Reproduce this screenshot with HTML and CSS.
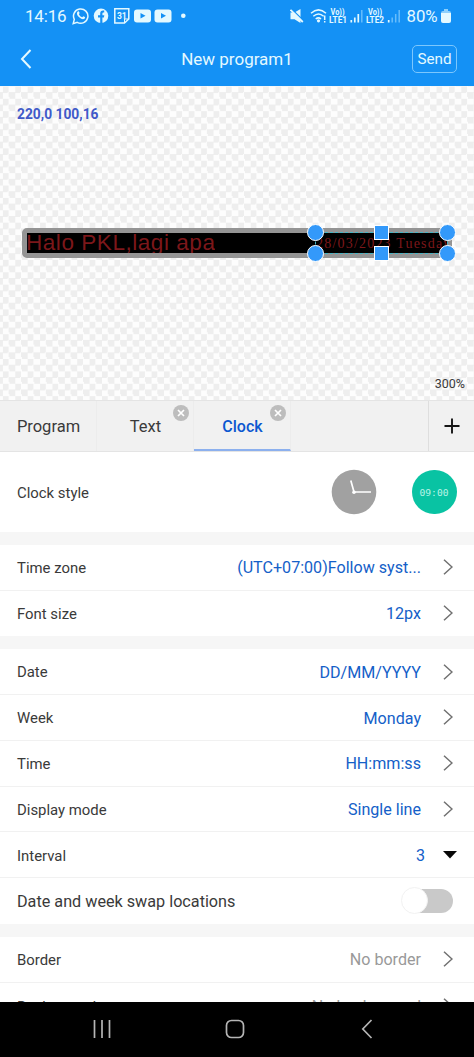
FILE: index.html
```html
<!DOCTYPE html>
<html lang="en">
<head>
<meta charset="utf-8">
<title>New program1</title>
<link rel="stylesheet" href="styles.css">
</head>
<body>
<div class="phone">
  <header class="top">
    <div class="status">
      <span class="time">14:16</span>
      <svg class="status-left" width="118" height="20" viewBox="0 0 118 20">
        <path d="M1.2 17.6 2.3 13.4A7.2 7.2 0 1 1 5.2 16.4Z" fill="none" stroke="#e4f9ff" stroke-width="1.5"/>
        <path d="M5.2 6.2c1-1.5 1.7-1 2.4.8L6.9 8.2c.8 1.6 1.7 2.4 3.3 3.1l1.2-1.1c1.9.8 2.1 1.2 1.3 2.2-1.2 1.3-3.3.9-5.5-1.1C5 9.300 4.500 7.600 5.200 6.200Z" fill="#e4f9ff"/>
        <circle cx="29" cy="9.800" r="7.300" fill="#e4f9ff"/>
        <path d="M28.200 17.500v-6h-2.200V9.200h2.200V7.400c0-2.300 1.400-3.300 4-2.900v2c-1.500-.1-1.800.3-1.800 1.200v1.500h1.900l-.4 2.300h-1.500v6Z" fill="#1491f5"/>
        <path d="M42.800 2.700H56.800V13L52.500 17H42.800Z" fill="none" stroke="#e4f9ff" stroke-width="1.500"/>
        <path d="M52.500 17v-4h4.300" fill="none" stroke="#e4f9ff"/>
        <text x="49.800" y="13" class="cal">31</text>
        <rect x="62" y="3.500" width="17" height="13" rx="3" fill="#e4f9ff"/>
        <path d="M68.500 7v5.600l5-2.800Z" fill="#1491f5"/>
        <rect x="82.500" y="3.500" width="17" height="13" rx="3" fill="#e4f9ff"/>
        <path d="M89 7v5.600l5-2.800Z" fill="#1491f5"/>
        <circle cx="111.300" cy="9.800" r="2.300" fill="#e4f9ff"/>
      </svg>
      <svg class="status-right" width="112" height="20" viewBox="0 0 112 20">
        <path d="M.5 6.500h4L10.500 3v14L4.500 13.200h-4Z" fill="#e4f9ff"/>
        <path d="M1 2.500 13.500 14.700" stroke="#1491f5" stroke-width="1.500"/>
        <path d="M.5 3.800 12.800 16" stroke="#e4f9ff" stroke-width="1.800"/>
        <g fill="none" stroke="#e4f9ff" stroke-width="1.500">
          <path d="M21 7.300Q28.500.500 36 7.300M23.300 10.300Q28.500 5.600 33.700 10.300M25.700 13Q28.500 10.700 31 13"/>
          <path d="M34.700 9.500v4.500M34.700 15v1.500"/>
        </g>
        <circle cx="28.500" cy="14.800" r="1.600" fill="#e4f9ff"/>
        <text x="40.500" y="9.200" class="lte" textLength="14" lengthAdjust="spacingAndGlyphs">Vo))</text>
        <text x="39" y="17.200" class="lte" textLength="18" lengthAdjust="spacingAndGlyphs">LTE1</text>
        <path d="M61.300 14v2.500M64.800 11.500v5M68.300 8v8.500" stroke="#e4f9ff" stroke-width="1.700"/>
        <path d="M71.800 4v12.500" stroke="#68bdfb" stroke-width="1.500"/>
        <text x="78" y="9.200" class="lte" textLength="14" lengthAdjust="spacingAndGlyphs">Vo))</text>
        <text x="76" y="17.200" class="lte" textLength="18" lengthAdjust="spacingAndGlyphs">LTE2</text>
        <path d="M98.700 14v2.500" stroke="#e4f9ff" stroke-width="1.700"/>
        <path d="M102.200 11.500v5M105.700 8v8.500M109.200 4v12.500" stroke="#68bdfb" stroke-width="1.500"/>
      </svg>
      <span class="percent">80%</span>
      <svg class="battery" width="10" height="15" viewBox="0 0 10 15">
        <path d="M0 4Q0 2 2 2H3V0H7V2H8Q10 2 10 4Z" fill="#8dd0fc"/>
        <path d="M0 4H10V12Q10 14 8 14H2Q0 14 0 12Z" fill="#e4f9ff"/>
      </svg>
    </div>
    <div class="titlebar">
      <svg class="back" width="12" height="20" viewBox="0 0 12 20"><path d="M10.500 1 2 10l8.500 9" fill="none" stroke="#e4f9ff" stroke-width="2"/></svg>
      <h1 class="title">New program1</h1>
      <button class="send">Send</button>
    </div>
  </header>

  <section class="canvas">
    <div class="coords">220,0 100,16</div>
    <div class="led">
      <span class="led-text">Halo PKL,lagi apa</span>
      <div class="selection">
        <span class="led-date">28/03/2023 Tuesday</span>
        <i class="handle round tl"></i><i class="handle round tr"></i>
        <i class="handle round bl"></i><i class="handle round br"></i>
        <i class="handle square tm"></i><i class="handle square bm"></i>
      </div>
    </div>
    <div class="zoom">300%</div>
  </section>

  <nav class="tabs">
    <div class="tab">Program</div>
    <div class="tab">Text
      <svg class="close" width="16" height="16" viewBox="0 0 16 16"><circle cx="8" cy="8" r="8" fill="#bdbdbd"/><path d="m5 5 6 6m0-6-6 6" stroke="#fff" stroke-width="1.700"/></svg>
    </div>
    <div class="tab active">Clock
      <svg class="close" width="16" height="16" viewBox="0 0 16 16"><circle cx="8" cy="8" r="8" fill="#bdbdbd"/><path d="m5 5 6 6m0-6-6 6" stroke="#fff" stroke-width="1.700"/></svg>
    </div>
    <div class="add"><svg width="16" height="16" viewBox="0 0 16 16"><path d="M8 .5v15M.5 8h15" stroke="#161616" stroke-width="1.900"/></svg></div>
  </nav>

  <main class="settings">
    <section class="group style-row">
      <span class="label">Clock style</span>
      <svg class="analog" width="46" height="46" viewBox="0 0 46 46"><circle cx="23" cy="23" r="22.300" fill="#a1a1a1"/><path d="M19.800 11.500 23 23h17" fill="none" stroke="#fff" stroke-width="1.700"/><circle cx="23" cy="23.200" r="1.800" fill="#fff"/></svg>
      <div class="digital"><svg width="30" height="11" viewBox="0 0 30 11"><text x="0.500" y="9" class="digits" textLength="29" lengthAdjust="spacingAndGlyphs">09:00</text></svg></div>
    </section>
    <section class="group">
      <div class="row"><span class="label">Time zone</span><span class="value">(UTC+07:00)Follow syst...</span><svg class="chev" viewBox="0 0 10 16"><path d="m1 .7 8 7.300-8 7.300"/></svg></div>
      <div class="row"><span class="label">Font size</span><span class="value">12px</span><svg class="chev" viewBox="0 0 10 16"><path d="m1 .7 8 7.300-8 7.300"/></svg></div>
    </section>
    <section class="group">
      <div class="row"><span class="label">Date</span><span class="value">DD/MM/YYYY</span><svg class="chev" viewBox="0 0 10 16"><path d="m1 .7 8 7.300-8 7.300"/></svg></div>
      <div class="row"><span class="label">Week</span><span class="value">Monday</span><svg class="chev" viewBox="0 0 10 16"><path d="m1 .7 8 7.300-8 7.300"/></svg></div>
      <div class="row"><span class="label">Time</span><span class="value">HH:mm:ss</span><svg class="chev" viewBox="0 0 10 16"><path d="m1 .7 8 7.300-8 7.300"/></svg></div>
      <div class="row"><span class="label">Display mode</span><span class="value">Single line</span><svg class="chev" viewBox="0 0 10 16"><path d="m1 .7 8 7.300-8 7.300"/></svg></div>
      <div class="row interval"><span class="label">Interval</span><span class="value">3</span><svg class="drop" width="14" height="8" viewBox="0 0 14 8"><path d="M0 0H14L7 7.500Z" fill="#080808"/></svg></div>
      <div class="row"><span class="label wide">Date and week swap locations</span><span class="switch"><i class="knob"></i></span></div>
    </section>
    <section class="group">
      <div class="row"><span class="label">Border</span><span class="value muted">No border</span><svg class="chev" viewBox="0 0 10 16"><path d="m1 .7 8 7.300-8 7.300"/></svg></div>
      <div class="row background"><span class="label">Background</span><span class="value muted">No background</span><svg class="chev" viewBox="0 0 10 16"><path d="m1 .7 8 7.300-8 7.300"/></svg></div>
    </section>
  </main>

  <footer class="navbar">
    <svg width="18" height="20" viewBox="0 0 18 20"><path d="M1.500 1v18M9 1v18M16.500 1v18" stroke="#b5b5b5" stroke-width="1.700"/></svg>
    <svg class="home" width="20" height="20" viewBox="0 0 20 20"><rect x="1.500" y="1.500" width="17" height="17" rx="5" fill="none" stroke="#b5b5b5" stroke-width="1.700"/></svg>
    <svg width="12" height="20" viewBox="0 0 12 20"><path d="M10.500 1 1.800 10l8.700 9" fill="none" stroke="#b5b5b5" stroke-width="1.700"/></svg>
  </footer>
</div>
</body>
</html>
```
FILE: styles.css
```css
* { box-sizing: border-box; }
body { margin: 0; font-family: Roboto, sans-serif; color: #3a3a3a; }
svg { display: block; flex: none; }
.phone { width: 474px; height: 1057px; display: flex; flex-direction: column; overflow: hidden; background: #fff; }

.top { height: 86px; flex: none; background: #1491f5; color: #e4f9ff; }
.status { height: 32px; display: flex; align-items: center; padding-left: 25px; }
.time { width: 47px; font-size: 17px; letter-spacing: -.2px; }
.status-left { margin-top: -1px; }
.status-right { margin-left: 100px; margin-top: -1px; }
.percent { margin-left: 4.500px; width: 34px; font-size: 16.800px; }
.battery { margin-top: 1px; }
.cal { font: bold 8.500px Roboto, sans-serif; fill: #e4f9ff; text-anchor: middle; }
.lte { font: bold 8.500px Roboto, sans-serif; fill: #e4f9ff; }
.titlebar { height: 54px; display: grid; grid-template-columns: 74px 1fr 74px; align-items: center; }
.back { margin-left: 20px; }
.title { margin: 0; font-size: 17px; font-weight: 400; text-align: center; }
.send { width: 45px; height: 28px; margin: -1px 0 0 12px; padding: 0; border: 1px solid #7cc7fd; border-radius: 5px; background: none; color: inherit; font: 15.200px Roboto, sans-serif; }

.canvas { height: 314px; flex: none; display: flex; flex-direction: column; background: conic-gradient(#fdfdfd 25%, #eee 0 50%, #fdfdfd 0 75%, #eee 0) 2.900px .4px / 12.400px 12.400px; }
.coords { height: 142px; padding: 20px 17px 0; font-size: 13.800px; line-height: 17px; font-weight: 700; color: #4059c9; }
.led { width: 430px; height: 30px; margin-left: 22px; display: flex; justify-content: space-between; border: 5px solid #949494; border-radius: 5px; background: #000; }
.led-text { height: 21px; overflow: hidden; margin: -1px 0 0 -1px; font: 22.500px/22px "Liberation Sans", sans-serif; letter-spacing: .55px; color: #7c171a; white-space: nowrap; }
.selection { position: relative; width: 133px; height: 22px; margin: -1px -1px 0 0; border: 1px dashed #45b5c5; }
.led-date { display: block; width: 131px; overflow: hidden; white-space: nowrap; font: 14px/22px "Liberation Serif", serif; letter-spacing: 1.200px; color: #7c171a; }
.handle { position: absolute; background: #3399fa; border: 1.500px solid #fff; }
.round { width: 17px; height: 17px; border-radius: 50%; }
.square { width: 15px; height: 15px; }
.tl { left: -9px; top: -9px; }
.tr { right: -9px; top: -9px; }
.bl { left: -9px; bottom: -9px; }
.br { right: -9px; bottom: -9px; }
.tm { left: 58px; top: -8px; }
.bm { left: 58px; bottom: -8px; }
.zoom { margin-top: auto; padding: 0 9px 9px; text-align: right; font-size: 12.500px; line-height: 15px; }

.tabs { height: 52px; flex: none; display: flex; background: #f1f1f1; border-top: 1px solid #e4e4e4; border-bottom: 1px solid #e4e4e4; font-size: 16.500px; }
.tab { position: relative; width: 97px; display: flex; align-items: center; justify-content: center; padding: 1px 0 0 1px; border-right: 1px solid #ececec; }
.active { padding-top: 3px; color: #0b57d0; font-size: 16px; font-weight: 500; border-bottom: 2px solid #8cb0ee; }
.close { position: absolute; right: 4px; top: 4px; }
.add { margin-left: auto; width: 46px; display: flex; align-items: center; justify-content: center; border-left: 1px solid #dedede; }

.settings { flex: 1; min-height: 0; display: flex; flex-direction: column; gap: 12.800px; overflow: hidden; background: #f6f6f6; }
.group { flex: none; background: #fff; }
.style-row { height: 80px; display: flex; align-items: center; padding-left: 17px; }
.analog { margin-left: auto; }
.digital { width: 44.600px; height: 44.600px; margin: 0 17.500px 0 35px; border-radius: 50%; background: #09c3a3; display: flex; align-items: center; justify-content: center; }
.digits { font: 9.500px "DejaVu Sans Mono", monospace; fill: #b9f4e7; }
.row { height: 45.800px; display: flex; align-items: center; padding: 0 21px 0 17px; border-bottom: 1px solid #f1f1f1; }
.row:last-child { border-bottom-color: transparent; }
.label { padding-top: 1.500px; font-size: 14.900px; }
.wide { font-size: 16.200px; }
.value { margin-left: auto; padding-top: 1.500px; font-size: 16.100px; color: #1460c8; }
.muted { color: #999; }
.chev { width: 10px; height: 16px; margin-left: 22px; }
.chev path { fill: none; stroke: #707070; stroke-width: 1.500; }
.interval { padding-right: 17px; }
.drop { margin-left: 18px; }
.switch { width: 51px; height: 24px; margin-left: auto; border-radius: 12px; background: #c9c9c9; }
.knob { display: block; width: 27px; height: 27px; margin: -1.500px 0 0 -1px; border-radius: 50%; background: #fff; border: 1px solid #f2f2f2; }
.background { height: 47.500px; }

.navbar { height: 55.500px; flex: none; display: flex; align-items: center; justify-content: space-between; padding: 0 101px 0 93px; background: #000; }
.home { margin-right: 2px; }
```
